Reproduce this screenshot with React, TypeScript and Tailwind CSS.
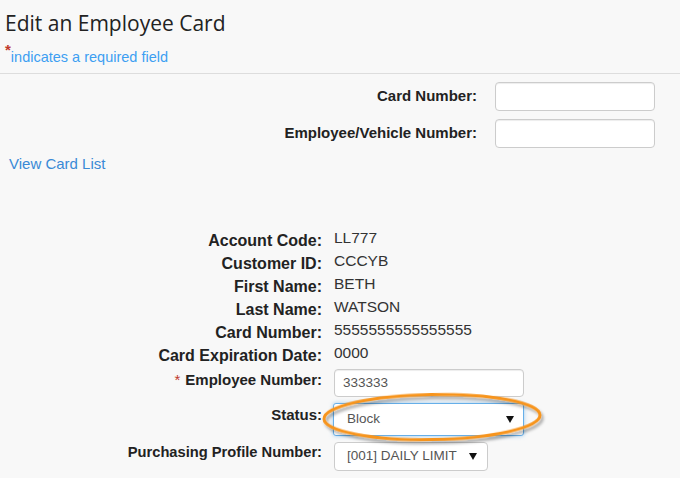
import React from "react";

function Arrow() {
  return (
    <svg width="8" height="7" viewBox="0 0 8 7" className="shrink-0">
      <path d="M0 0 H8 L4 7 Z" fill="#111" />
    </svg>
  );
}

const infoRows: [string, string][] = [
  ["Account Code:", "LL777"],
  ["Customer ID:", "CCCYB"],
  ["First Name:", "BETH"],
  ["Last Name:", "WATSON"],
  ["Card Number:", "5555555555555555"],
  ["Card Expiration Date:", "0000"],
];

export default function App() {
  return (
    <div className="min-h-[478px] w-[680px] overflow-hidden bg-[#f8f8f8] font-['Liberation_Sans',Arial,sans-serif] text-[#333]">
      {/* header */}
      <div className="h-[74px] border-b border-[#dddddd] pl-[5px] pt-[9px]">
        <h1 className="font-['Open_Sans',sans-serif] text-[21px] leading-[28px] text-[#222]">
          Edit an Employee Card
        </h1>
        <p className="mt-[8px] flex items-start text-[14.5px] leading-[17px]">
          <span className="text-[15px] font-bold leading-[10px] text-[#c0392b]">*</span>
          <span className="mt-[4px] text-[#3d9ff2]">indicates a required field</span>
        </p>
      </div>

      {/* search form */}
      <div className="flex flex-col items-end gap-[8px] pr-[25px] pt-[8px]">
        <div className="flex items-center gap-[18px]">
          <span className="text-[15px] font-bold text-[#222]">Card Number:</span>
          <div className="h-[29px] w-[160px] rounded-[4px] border border-[#cccccc] bg-white shadow-[inset_0_1px_1px_rgba(0,0,0,0.075)]" />
        </div>
        <div className="flex items-center gap-[18px]">
          <span className="text-[15px] font-bold text-[#222]">Employee/Vehicle Number:</span>
          <div className="h-[29px] w-[160px] rounded-[4px] border border-[#cccccc] bg-white shadow-[inset_0_1px_1px_rgba(0,0,0,0.075)]" />
        </div>
      </div>

      <div className="mt-[7px] pl-[9px] text-[15px] leading-[17px] text-[#3a8ad6]">View Card List</div>

      {/* details */}
      <div className="mt-[57px] flex flex-col">
        {infoRows.map(([label, value]) => (
          <div key={label} className="flex h-[23px] items-start">
            <div className="w-[322px] text-right text-[16px] font-bold leading-[23px] text-[#222]">{label}</div>
            <div className="ml-[12px] text-[15.5px] leading-[17px] text-[#333]">{value}</div>
          </div>
        ))}

        <div className="mt-[2px] flex items-start">
          <div className="w-[322px] text-right text-[15px] font-bold leading-[22px] text-[#222]">
            <span className="mr-[5px] font-normal text-[#c0392b]">*</span>
            Employee Number:
          </div>
          <div className="ml-[12px] flex h-[28px] w-[190px] items-center rounded-[4px] border border-[#cccccc] bg-white pl-[8px] text-[13.5px] text-[#555] shadow-[inset_0_1px_1px_rgba(0,0,0,0.075)]">
            333333
          </div>
        </div>

        <div className="relative mt-[6px] flex items-start">
          <div className="w-[322px] text-right text-[15px] font-bold leading-[24px] text-[#222]">Status:</div>
          <div className="ml-[11px] flex h-[33px] w-[191px] items-center justify-between rounded-[3px] border border-[#66afe9] bg-white pl-[13px] pr-[9px] text-[13.5px] text-[#555] shadow-[0_0_4px_rgba(102,175,233,0.6)]">
            <span>Block</span>
            <Arrow />
          </div>
          <svg
            className="pointer-events-none absolute left-[314px] top-[-14px]"
            width="240"
            height="60"
            viewBox="0 0 240 60"
          >
            <defs>
              <filter id="sh" x="-10%" y="-30%" width="120%" height="160%">
                <feDropShadow dx="2" dy="3" stdDeviation="1.6" floodColor="#000" floodOpacity="0.35" />
              </filter>
            </defs>
            <ellipse
              cx="118"
              cy="28"
              rx="108"
              ry="22.5"
              fill="none"
              stroke="#f7941e"
              strokeWidth="3"
              filter="url(#sh)"
              transform="rotate(-1 118 28)"
            />
          </svg>
        </div>

        <div className="mt-[6px] flex items-start">
          <div className="w-[322px] text-right text-[14.7px] font-bold leading-[20px] text-[#222]">Purchasing Profile Number:</div>
          <div className="ml-[12px] flex h-[29px] w-[154px] items-center justify-between rounded-[4px] border border-[#cccccc] bg-white pl-[12px] pr-[10px] text-[13.5px] text-[#555]">
            <span>[001] DAILY LIMIT</span>
            <Arrow />
          </div>
        </div>
      </div>
    </div>
  );
}
